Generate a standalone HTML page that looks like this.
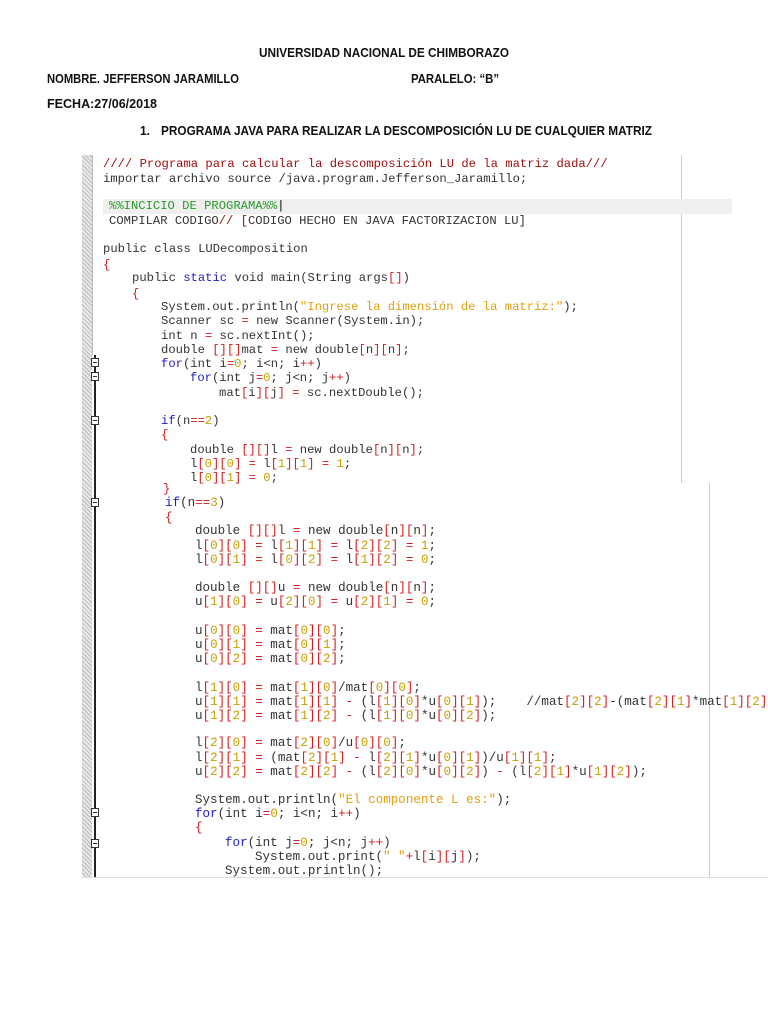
<!DOCTYPE html>
<html><head><meta charset="utf-8">
<style>
html,body{margin:0;padding:0;background:#fff;}
body{width:768px;height:1024px;position:relative;overflow:hidden;}
.l{position:absolute;white-space:pre;font-family:"Liberation Mono","DejaVu Sans Mono",monospace;font-size:12.2px;color:#333;line-height:14px;}
.b{font-size:12.55px;}
.c{color:#a01010}
.s{color:#e0a010}
.k{color:#1c1cc8}
.r{color:#d02020}
.n{color:#c8a000}
.g{color:#2a9a2a}
.fold{position:absolute;left:91px;width:8px;height:9px;border:1px solid #333;background:#fff;box-sizing:border-box;}
.fold:after{content:"";position:absolute;left:1px;right:1px;top:3px;height:1px;background:#333;}
</style></head><body>
<svg width="768" height="140" style="position:absolute;left:0;top:0" font-family="Liberation Sans, sans-serif" font-weight="bold" font-size="12.5" fill="#111">
<text x="259" y="57" textLength="250" lengthAdjust="spacingAndGlyphs">UNIVERSIDAD NACIONAL DE CHIMBORAZO</text>
<text x="47" y="83" textLength="192" lengthAdjust="spacingAndGlyphs">NOMBRE. JEFFERSON JARAMILLO</text>
<text x="411" y="83" textLength="88" lengthAdjust="spacingAndGlyphs">PARALELO: “B”</text>
<text x="47" y="108" textLength="110" lengthAdjust="spacingAndGlyphs">FECHA:27/06/2018</text>
<text x="140" y="135" textLength="10" lengthAdjust="spacingAndGlyphs">1.</text>
<text x="161" y="135" textLength="491" lengthAdjust="spacingAndGlyphs">PROGRAMA JAVA PARA REALIZAR LA DESCOMPOSICIÓN LU DE CUALQUIER MATRIZ</text>
</svg>

<!-- gutter -->
<div style="position:absolute;left:82px;top:155px;width:10px;height:723px;background:repeating-linear-gradient(45deg,#bbb 0 1px,#e8e8e8 1px 3px);"></div>
<div style="position:absolute;left:94px;top:355px;width:2px;height:523px;background:#222;"></div>
<div style="position:absolute;left:92px;top:155px;width:1px;height:200px;background:#bbb;"></div>
<!-- right borders -->
<div style="position:absolute;left:681px;top:155px;width:1px;height:328px;background:#ccc;"></div>
<div style="position:absolute;left:709px;top:483px;width:1px;height:395px;background:#ccc;"></div>
<div style="position:absolute;left:82px;top:877px;width:686px;height:1px;background:#ddd;"></div>
<!-- highlight -->
<div style="position:absolute;left:103px;top:199px;width:629px;height:15px;background:#efefef;"></div>

<div class="fold" style="top:358px"></div>
<div class="fold" style="top:372px"></div>
<div class="fold" style="top:416px"></div>
<div class="fold" style="top:498px"></div>
<div class="fold" style="top:808px"></div>
<div class="fold" style="top:839px"></div>

<div class="l c" style="left:103px;top:157px">//// Programa para calcular la descomposición LU de la matriz dada///</div>
<div class="l" style="left:103px;top:172px">importar archivo source /java.program.Jefferson_Jaramillo;</div>
<div class="l g" style="left:109px;top:199px">%%INCICIO DE PROGRAMA%%<span style="color:#000">|</span></div>
<div class="l" style="left:109px;top:214px">COMPILAR CODIGO<span class="c">// [</span>CODIGO HECHO EN JAVA FACTORIZACION LU]</div>
<div class="l" style="left:103px;top:242px">public class LUDecomposition</div>
<div class="l r" style="left:103px;top:258px">{</div>
<div class="l" style="left:132px;top:271px">public <span class="k">static</span> void main(String args<span class="r">[]</span>)</div>
<div class="l r" style="left:132px;top:287px">{</div>
<div class="l" style="left:161px;top:300px">System.out.println(<span class="s">"Ingrese la dimensión de la matriz:"</span>);</div>
<div class="l" style="left:161px;top:314px">Scanner sc <span class="r">=</span> new Scanner(System.in);</div>
<div class="l" style="left:161px;top:329px">int n <span class="r">=</span> sc.nextInt();</div>
<div class="l" style="left:161px;top:343px">double <span class="r">[][]</span>mat <span class="r">=</span> new double<span class="r">[</span>n<span class="r">][</span>n<span class="r">]</span>;</div>
<div class="l" style="left:161px;top:357px"><span class="k">for</span>(int i<span class="r">=</span><span class="n">0</span>; i&lt;n; i<span class="r">++</span>)</div>
<div class="l" style="left:190px;top:371px"><span class="k">for</span>(int j<span class="r">=</span><span class="n">0</span>; j&lt;n; j<span class="r">++</span>)</div>
<div class="l" style="left:219px;top:386px">mat<span class="r">[</span>i<span class="r">][</span>j<span class="r">]</span> <span class="r">=</span> sc.nextDouble();</div>
<div class="l" style="left:161px;top:414px"><span class="k">if</span>(n<span class="r">==</span><span class="n">2</span>)</div>
<div class="l r" style="left:161px;top:428px">{</div>
<div class="l" style="left:190px;top:443px">double <span class="r">[][]</span>l <span class="r">=</span> new double<span class="r">[</span>n<span class="r">][</span>n<span class="r">]</span>;</div>
<div class="l" style="left:190px;top:457px">l<span class="r">[</span><span class="n">0</span><span class="r">][</span><span class="n">0</span><span class="r">]</span> <span class="r">=</span> l<span class="r">[</span><span class="n">1</span><span class="r">][</span><span class="n">1</span><span class="r">]</span> <span class="r">=</span> <span class="n">1</span>;</div>
<div class="l" style="left:190px;top:471px">l<span class="r">[</span><span class="n">0</span><span class="r">][</span><span class="n">1</span><span class="r">]</span> <span class="r">=</span> <span class="n">0</span>;</div>
<div class="l r" style="left:163px;top:482px">}</div>

<div class="l b" style="left:165px;top:496px"><span class="k">if</span>(n<span class="r">==</span><span class="n">3</span>)</div>
<div class="l b r" style="left:165px;top:511px">{</div>
<div class="l b" style="left:195px;top:524px">double <span class="r">[][]</span>l <span class="r">=</span> new double<span class="r">[</span>n<span class="r">][</span>n<span class="r">]</span>;</div>
<div class="l b" style="left:195px;top:539px">l<span class="r">[</span><span class="n">0</span><span class="r">][</span><span class="n">0</span><span class="r">]</span> <span class="r">=</span> l<span class="r">[</span><span class="n">1</span><span class="r">][</span><span class="n">1</span><span class="r">]</span> <span class="r">=</span> l<span class="r">[</span><span class="n">2</span><span class="r">][</span><span class="n">2</span><span class="r">]</span> <span class="r">=</span> <span class="n">1</span>;</div>
<div class="l b" style="left:195px;top:553px">l<span class="r">[</span><span class="n">0</span><span class="r">][</span><span class="n">1</span><span class="r">]</span> <span class="r">=</span> l<span class="r">[</span><span class="n">0</span><span class="r">][</span><span class="n">2</span><span class="r">]</span> <span class="r">=</span> l<span class="r">[</span><span class="n">1</span><span class="r">][</span><span class="n">2</span><span class="r">]</span> <span class="r">=</span> <span class="n">0</span>;</div>
<div class="l b" style="left:195px;top:581px">double <span class="r">[][]</span>u <span class="r">=</span> new double<span class="r">[</span>n<span class="r">][</span>n<span class="r">]</span>;</div>
<div class="l b" style="left:195px;top:595px">u<span class="r">[</span><span class="n">1</span><span class="r">][</span><span class="n">0</span><span class="r">]</span> <span class="r">=</span> u<span class="r">[</span><span class="n">2</span><span class="r">][</span><span class="n">0</span><span class="r">]</span> <span class="r">=</span> u<span class="r">[</span><span class="n">2</span><span class="r">][</span><span class="n">1</span><span class="r">]</span> <span class="r">=</span> <span class="n">0</span>;</div>
<div class="l b" style="left:195px;top:624px">u<span class="r">[</span><span class="n">0</span><span class="r">][</span><span class="n">0</span><span class="r">]</span> <span class="r">=</span> mat<span class="r">[</span><span class="n">0</span><span class="r">][</span><span class="n">0</span><span class="r">]</span>;</div>
<div class="l b" style="left:195px;top:638px">u<span class="r">[</span><span class="n">0</span><span class="r">][</span><span class="n">1</span><span class="r">]</span> <span class="r">=</span> mat<span class="r">[</span><span class="n">0</span><span class="r">][</span><span class="n">1</span><span class="r">]</span>;</div>
<div class="l b" style="left:195px;top:652px">u<span class="r">[</span><span class="n">0</span><span class="r">][</span><span class="n">2</span><span class="r">]</span> <span class="r">=</span> mat<span class="r">[</span><span class="n">0</span><span class="r">][</span><span class="n">2</span><span class="r">]</span>;</div>
<div class="l b" style="left:195px;top:681px">l<span class="r">[</span><span class="n">1</span><span class="r">][</span><span class="n">0</span><span class="r">]</span> <span class="r">=</span> mat<span class="r">[</span><span class="n">1</span><span class="r">][</span><span class="n">0</span><span class="r">]</span>/mat<span class="r">[</span><span class="n">0</span><span class="r">][</span><span class="n">0</span><span class="r">]</span>;</div>
<div class="l b" style="left:195px;top:695px">u<span class="r">[</span><span class="n">1</span><span class="r">][</span><span class="n">1</span><span class="r">]</span> <span class="r">=</span> mat<span class="r">[</span><span class="n">1</span><span class="r">][</span><span class="n">1</span><span class="r">]</span> <span class="r">-</span> (l<span class="r">[</span><span class="n">1</span><span class="r">][</span><span class="n">0</span><span class="r">]</span>*u<span class="r">[</span><span class="n">0</span><span class="r">][</span><span class="n">1</span><span class="r">]</span>);    //mat<span class="r">[</span><span class="n">2</span><span class="r">][</span><span class="n">2</span><span class="r">]</span>-(mat<span class="r">[</span><span class="n">2</span><span class="r">][</span><span class="n">1</span><span class="r">]</span>*mat<span class="r">[</span><span class="n">1</span><span class="r">][</span><span class="n">2</span><span class="r">]</span></div>
<div class="l b" style="left:195px;top:709px">u<span class="r">[</span><span class="n">1</span><span class="r">][</span><span class="n">2</span><span class="r">]</span> <span class="r">=</span> mat<span class="r">[</span><span class="n">1</span><span class="r">][</span><span class="n">2</span><span class="r">]</span> <span class="r">-</span> (l<span class="r">[</span><span class="n">1</span><span class="r">][</span><span class="n">0</span><span class="r">]</span>*u<span class="r">[</span><span class="n">0</span><span class="r">][</span><span class="n">2</span><span class="r">]</span>);</div>
<div class="l b" style="left:195px;top:736px">l<span class="r">[</span><span class="n">2</span><span class="r">][</span><span class="n">0</span><span class="r">]</span> <span class="r">=</span> mat<span class="r">[</span><span class="n">2</span><span class="r">][</span><span class="n">0</span><span class="r">]</span>/u<span class="r">[</span><span class="n">0</span><span class="r">][</span><span class="n">0</span><span class="r">]</span>;</div>
<div class="l b" style="left:195px;top:751px">l<span class="r">[</span><span class="n">2</span><span class="r">][</span><span class="n">1</span><span class="r">]</span> <span class="r">=</span> (mat<span class="r">[</span><span class="n">2</span><span class="r">][</span><span class="n">1</span><span class="r">]</span> <span class="r">-</span> l<span class="r">[</span><span class="n">2</span><span class="r">][</span><span class="n">1</span><span class="r">]</span>*u<span class="r">[</span><span class="n">0</span><span class="r">][</span><span class="n">1</span><span class="r">]</span>)/u<span class="r">[</span><span class="n">1</span><span class="r">][</span><span class="n">1</span><span class="r">]</span>;</div>
<div class="l b" style="left:195px;top:765px">u<span class="r">[</span><span class="n">2</span><span class="r">][</span><span class="n">2</span><span class="r">]</span> <span class="r">=</span> mat<span class="r">[</span><span class="n">2</span><span class="r">][</span><span class="n">2</span><span class="r">]</span> <span class="r">-</span> (l<span class="r">[</span><span class="n">2</span><span class="r">][</span><span class="n">0</span><span class="r">]</span>*u<span class="r">[</span><span class="n">0</span><span class="r">][</span><span class="n">2</span><span class="r">]</span>) <span class="r">-</span> (l<span class="r">[</span><span class="n">2</span><span class="r">][</span><span class="n">1</span><span class="r">]</span>*u<span class="r">[</span><span class="n">1</span><span class="r">][</span><span class="n">2</span><span class="r">]</span>);</div>
<div class="l b" style="left:195px;top:793px">System.out.println(<span class="s">"El componente L es:"</span>);</div>
<div class="l b" style="left:195px;top:807px"><span class="k">for</span>(int i<span class="r">=</span><span class="n">0</span>; i&lt;n; i<span class="r">++</span>)</div>
<div class="l b r" style="left:195px;top:821px">{</div>
<div class="l b" style="left:225px;top:836px"><span class="k">for</span>(int j<span class="r">=</span><span class="n">0</span>; j&lt;n; j<span class="r">++</span>)</div>
<div class="l b" style="left:255px;top:850px">System.out.print(<span class="s">" "</span><span class="r">+</span>l<span class="r">[</span>i<span class="r">][</span>j<span class="r">]</span>);</div>
<div class="l b" style="left:225px;top:864px;height:13px;overflow:hidden">System.out.println();</div>
</body></html>
